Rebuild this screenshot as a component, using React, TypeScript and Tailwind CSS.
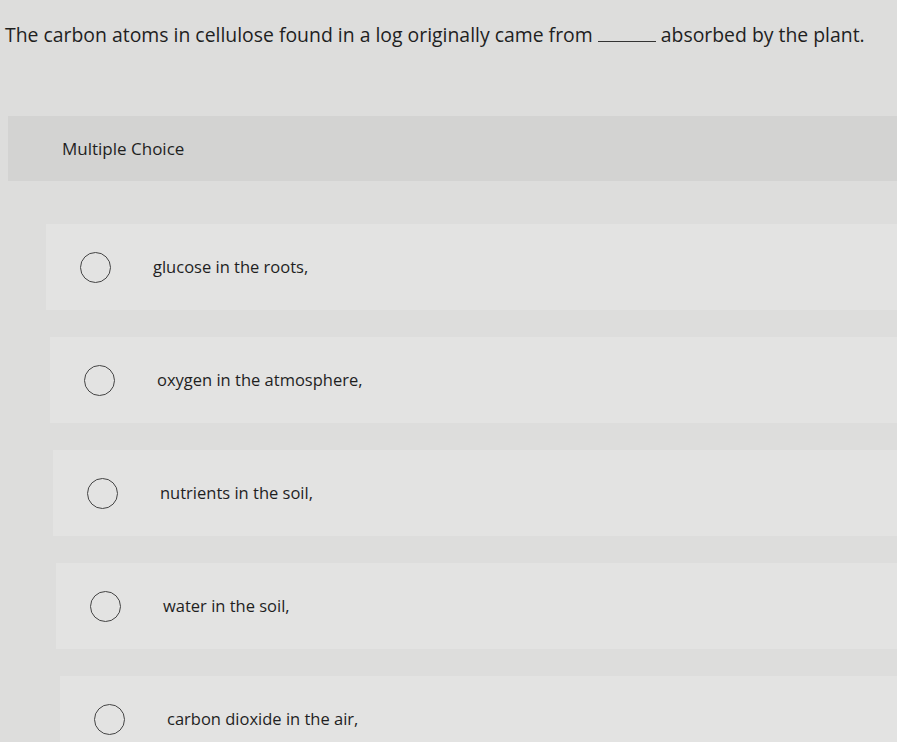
import React from "react";

const options = [
  { text: "glucose in the roots,", ml: "ml-[46px]" },
  { text: "oxygen in the atmosphere,", ml: "ml-[50px]" },
  { text: "nutrients in the soil,", ml: "ml-[53px]" },
  { text: "water in the soil,", ml: "ml-[56px]" },
  { text: "carbon dioxide in the air,", ml: "ml-[60px]" },
];

export default function App() {
  return (
    <div
      className="w-[897px] h-[742px] overflow-hidden bg-[#dddddc] text-[#1f1f1f]"
      style={{ fontFamily: '"Open Sans", "Noto Sans", sans-serif' }}
    >
      <div className="pt-[22px] pl-[5px] text-[19.4px] font-medium leading-[26px] whitespace-nowrap">
        The carbon atoms in cellulose found in a log originally came from{" "}
        <span className="inline-block w-[58px] h-[10px] border-b-[1.5px] border-[#333] align-baseline"></span>{" "}
        absorbed by the plant.
      </div>
      <div className="mt-[68px] ml-[8px] h-[65px] bg-[#d3d3d2] flex items-center pl-[54px] text-[17px] font-medium">
        Multiple Choice
      </div>
      <div className="mt-[43px] flex flex-col gap-[27px]">
        {options.map((o) => (
          <div
            key={o.text}
            className={`${o.ml} h-[86px] bg-[#e3e3e2] flex items-center`}
          >
            <div className="ml-[34px] w-[31px] h-[31px] rounded-full border-[1.5px] border-[#444] shrink-0"></div>
            <div className="ml-[42px] text-[16.5px] font-medium leading-none">{o.text}</div>
          </div>
        ))}
      </div>
    </div>
  );
}
